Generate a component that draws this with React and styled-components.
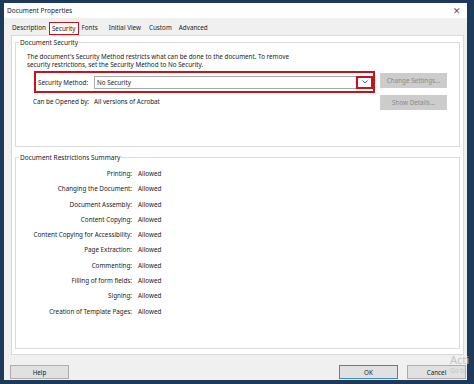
import React from 'react'
import styled, { createGlobalStyle } from 'styled-components'

const Global = createGlobalStyle`
  html, body { margin: 0; padding: 0; }
  body {
    width: 474px;
    height: 384px;
    overflow: hidden;
    background: #1d3a5a;
    font-family: "Noto Sans", "Open Sans", sans-serif;
    font-size: 6.3px;
    color: #222;
  }
`

const Window = styled.div`
  position: relative;
  margin: 3px 7px 0 4px;
  width: 463px;
  height: 377px;
  background: #f0f0f0;
  display: flex;
  flex-direction: column;
`

const TitleBar = styled.div`
  height: 15px;
  background: #fff;
  display: flex;
  align-items: center;
  justify-content: space-between;
  padding: 0 6px 0 3px;
  font-size: 6.5px;
`

const Close = styled.span`
  font-size: 9px;
  color: #555;
  line-height: 1;
`

const TabStrip = styled.div`
  height: 17px;
  display: flex;
  align-items: flex-end;
  padding-left: 5px;
  font-size: 6.3px;
`

const Tab = styled.div`
  height: 13px;
  display: flex;
  align-items: center;
  padding: 0 ${p => p.pad || 2}px;
  box-sizing: border-box;
  margin-right: ${p => p.gap || 0}px;
  border: ${p => p.active ? '1.5px solid #c4141c' : '1px solid transparent'};
  background: ${p => p.active ? '#fff' : 'transparent'};
  margin-bottom: ${p => p.active ? '0' : '1px'};
`

const Panel = styled.div`
  margin: 0 3px 0 7px;
  height: 320px;
  background: #fff;
  border: 1px solid #dadada;
  box-sizing: border-box;
  padding: 2px 3px 2px 3px;
  display: flex;
  flex-direction: column;
  gap: 6px;
`

const Group = styled.fieldset`
  margin: 0;
  border: 1px solid #dcdcdc;
  padding: 3px 8px 0 10px;
  height: ${p => p.h}px;
  box-sizing: border-box;
  min-width: 0;
`

const Legend = styled.legend`
  padding: 0 1px;
  margin-left: -7px;
  font-size: 6.5px;
`

const Para = styled.p`
  margin: 3px 0 0 1px;
  line-height: 7.5px;
`

const MethodRow = styled.div`
  display: flex;
  align-items: flex-start;
  margin-top: 3px;
  padding-left: 8px;
  gap: 5px;
`

const Highlight = styled.div`
  width: 341px;
  height: 22px;
  box-sizing: border-box;
  border: 2px solid #c4141c;
  display: flex;
  align-items: center;
  padding-left: 2px;
`

const FieldLabel = styled.span`
  width: ${p => p.w || 56}px;
  flex-shrink: 0;
  white-space: nowrap;
`

const Select = styled.div`
  width: 279px;
  height: 13px;
  box-sizing: border-box;
  border: 1px solid #a9a9a9;
  display: flex;
  align-items: center;
  padding-left: 2px;
  justify-content: space-between;
`

const Arrow = styled.div`
  width: 17px;
  height: 13px;
  margin-right: -1px;
  box-sizing: border-box;
  border: 2px solid #c4141c;
  display: flex;
  align-items: center;
  justify-content: center;
`

const SideButtons = styled.div`
  display: flex;
  flex-direction: column;
  gap: 7px;
  margin-top: 2px;
`

const GrayButton = styled.div`
  width: 67px;
  height: 15px;
  background: #cccccc;
  color: #8a8a8a;
  display: flex;
  align-items: center;
  justify-content: center;
`

const OpenRow = styled.div`
  display: flex;
  margin-top: -13px;
  padding-left: 7px;
`

const RestrictList = styled.div`
  display: grid;
  grid-template-columns: 106px auto;
  column-gap: 6px;
  margin-top: 1px;
`

const RLabel = styled.div`
  text-align: right;
  white-space: nowrap;
  height: 15.3px;
  line-height: 15.3px;
`

const RValue = styled.div`
  height: 15.3px;
  line-height: 15.3px;
`

const Footer = styled.div`
  flex: 1;
  display: flex;
  align-items: flex-start;
  justify-content: space-between;
  padding: 10px 1px 0 6px;
`

const Button = styled.div`
  width: 59px;
  height: 14px;
  box-sizing: border-box;
  background: #e1e1e1;
  border: 1px solid ${p => p.primary ? '#3c84d6' : '#adadad'};
  display: flex;
  align-items: center;
  justify-content: center;
`

const RightButtons = styled.div`
  display: flex;
  gap: 9px;
`

const Watermark = styled.div`
  position: absolute;
  left: 446px;
  top: 351px;
  color: #c4c4c4;
  font-size: 11px;
  line-height: 11px;
  pointer-events: none;
  & span { display: block; font-size: 6.5px; line-height: 8px; margin-top: 2px; }
`

const rows = [
  'Printing:',
  'Changing the Document:',
  'Document Assembly:',
  'Content Copying:',
  'Content Copying for Accessibility:',
  'Page Extraction:',
  'Commenting:',
  'Filling of form fields:',
  'Signing:',
  'Creation of Template Pages:',
]

export default function App() {
  return (
    <>
      <Global />
      <Window>
        <TitleBar>
          <span>Document Properties</span>
          <Close>✕</Close>
        </TitleBar>
        <TabStrip>
          <Tab pad={2}>Description</Tab>
          <Tab active pad={2}>Security</Tab>
          <Tab pad={2} gap={5}>Fonts</Tab>
          <Tab pad={2} gap={2}>Initial View</Tab>
          <Tab pad={2} gap={1}>Custom</Tab>
          <Tab pad={2}>Advanced</Tab>
        </TabStrip>
        <Panel>
          <Group h={109}>
            <Legend>Document Security</Legend>
            <Para>
              The document's Security Method restricts what can be done to the document. To remove<br />
              security restrictions, set the Security Method to No Security.
            </Para>
            <MethodRow>
              <Highlight>
                <FieldLabel>Security Method:</FieldLabel>
                <Select>
                  <span>No Security</span>
                  <Arrow>
                    <svg width="6" height="4" viewBox="0 0 6 4">
                      <path d="M0.5 0.5 L3 3 L5.5 0.5" fill="none" stroke="#666" strokeWidth="1" />
                    </svg>
                  </Arrow>
                </Select>
              </Highlight>
              <SideButtons>
                <GrayButton>Change Settings...</GrayButton>
                <GrayButton>Show Details...</GrayButton>
              </SideButtons>
            </MethodRow>
            <OpenRow>
              <FieldLabel w={61}>Can be Opened by:</FieldLabel>
              <span>All versions of Acrobat</span>
            </OpenRow>
          </Group>
          <Group h={196}>
            <Legend>Document Restrictions Summary</Legend>
            <RestrictList>
              {rows.map(r => (
                <React.Fragment key={r}>
                  <RLabel>{r}</RLabel>
                  <RValue>Allowed</RValue>
                </React.Fragment>
              ))}
            </RestrictList>
          </Group>
        </Panel>
        <Footer>
          <Button>Help</Button>
          <RightButtons>
            <Button primary>OK</Button>
            <Button>Cancel</Button>
          </RightButtons>
        </Footer>
        <Watermark>
          Acti
          <span>Go to</span>
        </Watermark>
      </Window>
    </>
  )
}
